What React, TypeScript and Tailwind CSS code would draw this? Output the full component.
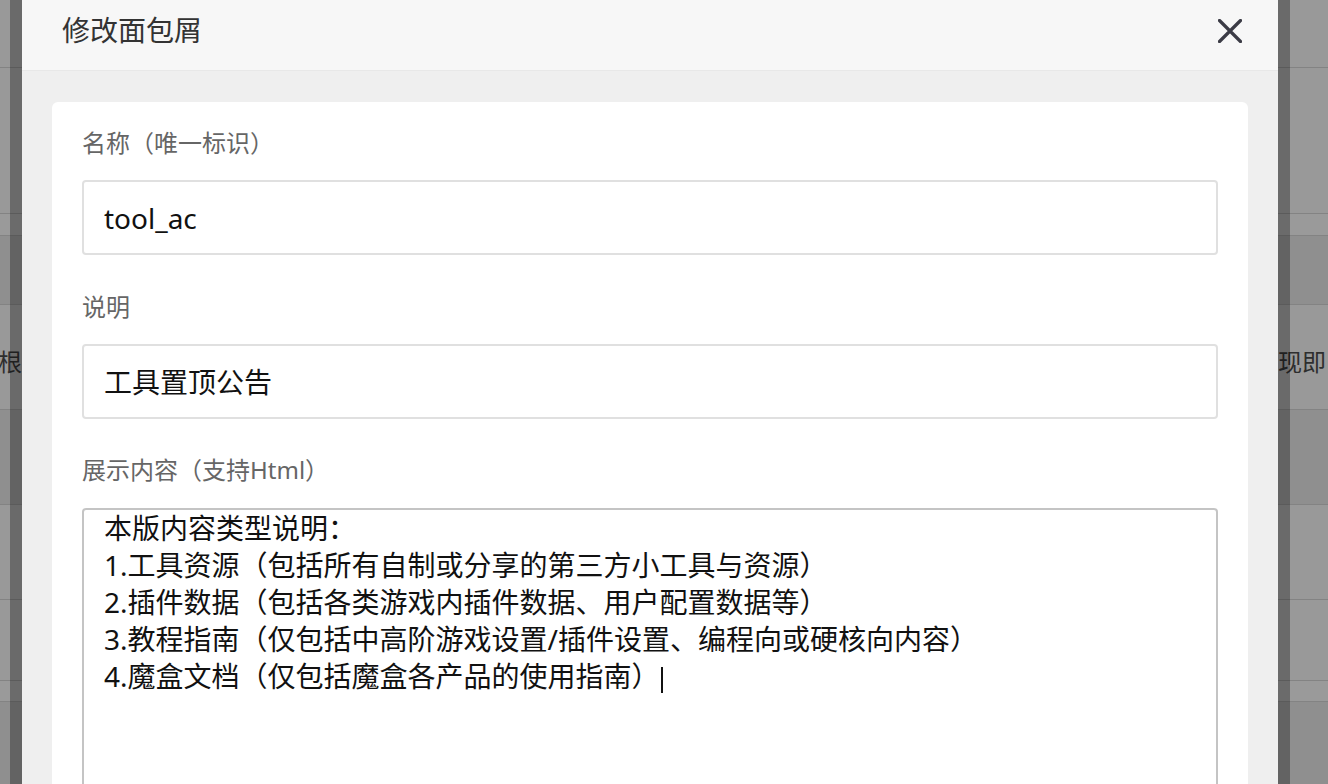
import React from "react";

const rows: { h: number; bg: string }[] = [
  { h: 68, bg: "bg-[#999999]" },
  { h: 146, bg: "bg-[#999999]" },
  { h: 22, bg: "bg-[#9a9a9a]" },
  { h: 69, bg: "bg-[#8f8f8f]" },
  { h: 105, bg: "bg-[#999999]" },
  { h: 95, bg: "bg-[#8f8f8f]" },
  { h: 95, bg: "bg-[#999999]" },
  { h: 81, bg: "bg-[#999999]" },
  { h: 21, bg: "bg-[#9a9a9a]" },
  { h: 100, bg: "bg-[#8f8f8f]" },
];

const lines = [
  "本版内容类型说明：",
  "1.工具资源（包括所有自制或分享的第三方小工具与资源）",
  "2.插件数据（包括各类游戏内插件数据、用户配置数据等）",
  "3.教程指南（仅包括中高阶游戏设置/插件设置、编程向或硬核向内容）",
  "4.魔盒文档（仅包括魔盒各产品的使用指南）",
];

export default function App() {
  const font = { fontFamily: '"Noto Sans", "Noto Sans CJK SC", sans-serif' };
  return (
    <div className="relative w-[1328px] h-[784px] overflow-hidden" style={font}>
      {/* background page under overlay */}
      <div className="flex flex-col w-full">
        {rows.map((r, i) => (
          <div
            key={i}
            className={`${r.bg} border-b border-[#838383] flex items-center shrink-0`}
            style={{ height: r.h }}
          >
            {i === 4 && (
              <div className="flex w-full items-center pt-[10px] text-[24px] text-[#2e2e2e] leading-none">
                <span className="w-[22px] flex justify-end overflow-hidden whitespace-nowrap">根</span>
                <span className="flex-1" />
                <span className="w-[50px] overflow-hidden whitespace-nowrap">现即</span>
              </div>
            )}
          </div>
        ))}
      </div>

      {/* modal */}
      <div className="absolute left-[22px] top-0 w-[1256px] h-[830px] flex flex-col shadow-[0_0_0_12px_rgba(0,0,0,0.3)]">
        <div className="shrink-0 h-[71px] bg-[#f7f7f7] border-b border-[#e8e8e8] flex items-start justify-between pl-[40px] pr-[36px] pt-[10px]">
          <span className="text-[28px] leading-[40px] text-[#333333]">修改面包屑</span>
          <svg width="24" height="24" viewBox="0 0 24 24" className="mt-[9px]">
            <path d="M1.5 1.5 L22.5 22.5 M22.5 1.5 L1.5 22.5" stroke="#3b3b45" strokeWidth="3.2" strokeLinecap="round" />
          </svg>
        </div>
        <div className="flex-1 min-h-0 bg-[#efefef] px-[30px] pt-[31px]">
          <div className="bg-white rounded-[6px] px-[30px] pt-[25px] h-[800px]">
            <div className="text-[24px] leading-[32px] text-[#666666]">名称（唯一标识）</div>
            <div className="mt-[21px] h-[75px] border-2 border-[#e0e0e0] rounded-[4px] flex items-center px-[20px] text-[28px] text-[#111111]">
              tool_ac
            </div>
            <div className="mt-[36px] text-[24px] leading-[32px] text-[#666666]">说明</div>
            <div className="mt-[21px] h-[75px] border-2 border-[#e0e0e0] rounded-[4px] flex items-center px-[20px] text-[28px] text-[#111111]">
              工具置顶公告
            </div>
            <div className="mt-[35px] text-[24px] leading-[32px] text-[#666666]">展示内容（支持Html）</div>
            <div className="mt-[22px] h-[320px] border-2 border-[#c4c4c4] rounded-[4px] px-[20px] text-[28px] leading-[37px] text-[#111111]">
              {lines.map((l, i) => (
                <div key={i} className="whitespace-nowrap">
                  {l}
                  {i === lines.length - 1 && (
                    <span className="inline-block align-middle ml-[1px] w-[2px] h-[26px] bg-[#111111]" />
                  )}
                </div>
              ))}
            </div>
          </div>
        </div>
      </div>
    </div>
  );
}
